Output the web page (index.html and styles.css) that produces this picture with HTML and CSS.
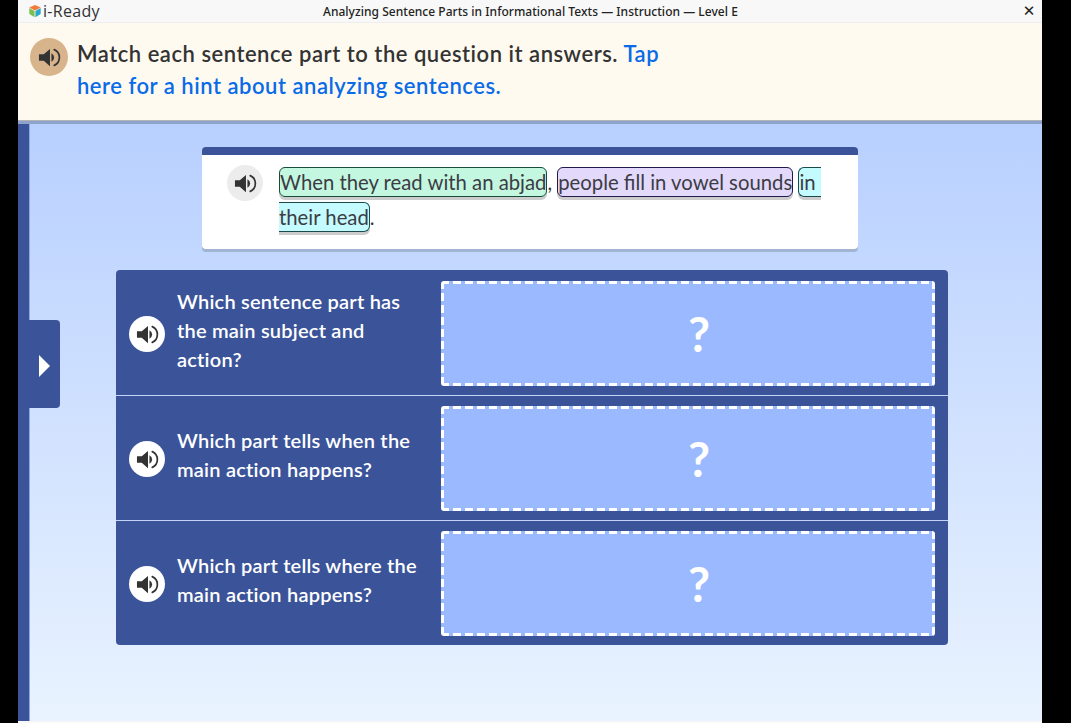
FILE: index.html
```html
<!DOCTYPE html>
<html lang="en">
<head>
    <meta charset="UTF-8">
    <meta name="viewport" content="width=device-width, initial-scale=1.0">
    <title>i-Ready</title>
    <link rel="stylesheet" href="styles.css">
</head>
<body>
    <svg class="icon-defs" width="0" height="0">
        <symbol id="speaker" viewBox="0 0 24 24">
            <path d="M1 8.5h5L12.5 3v18L6 15.500H1z" fill="currentColor"/>
            <path d="M14 7.500a5 5 0 0 1 0 9z" fill="currentColor"/>
            <path d="M17 3.800a9 9 0 0 1 0 16.400" fill="none" stroke="currentColor" stroke-width="1.800" stroke-linecap="round"/>
        </symbol>
    </svg>

    <div class="app">
        <header class="topbar">
            <div class="logo">
                <svg class="cube" viewBox="0 0 16 16">
                    <path d="M8 1l6.500 3L8 7.500 1.500 4z" fill="#f47a3a"/>
                    <path d="M1.500 4.500L7.500 8v7l-6-3.500z" fill="#7cc04b"/>
                    <path d="M14.500 4.500L8.500 8v7l6-3.500z" fill="#2aa7c9"/>
                </svg>
                <span>i-Ready</span>
            </div>
            <div class="lesson-title">Analyzing Sentence Parts in Informational Texts — Instruction — Level E</div>
            <div class="close">✕</div>
        </header>

        <section class="instruction">
            <button class="speak speak-tan"><svg><use href="#speaker"/></svg></button>
            <p>Match each sentence part to the question it answers. <a href="#">Tap here for a hint about analyzing sentences.</a></p>
        </section>

        <main class="stage">
            <div class="strip"></div>
            <div class="content">
                <div class="tab"><span class="arrow"></span></div>

                <div class="sentence-card">
                    <button class="speak speak-grey"><svg><use href="#speaker"/></svg></button>
                    <p class="sentence"><span class="part part-green">When they read with an abjad</span>, <span class="part part-purple">people fill in vowel sounds</span> <span class="part part-teal">in&nbsp;<br>their head</span>.</p>
                </div>

                <div class="match-table">
                    <div class="match-row">
                        <button class="speak speak-white"><svg><use href="#speaker"/></svg></button>
                        <div class="question">Which sentence part has the main subject and action?</div>
                        <div class="dropzone">?</div>
                    </div>
                    <div class="match-row">
                        <button class="speak speak-white"><svg><use href="#speaker"/></svg></button>
                        <div class="question">Which part tells when the main action happens?</div>
                        <div class="dropzone">?</div>
                    </div>
                    <div class="match-row">
                        <button class="speak speak-white"><svg><use href="#speaker"/></svg></button>
                        <div class="question">Which part tells where the main action happens?</div>
                        <div class="dropzone">?</div>
                    </div>
                </div>
            </div>
        </main>
        <div class="footer"></div>
    </div>
</body>
</html>
```

FILE: styles.css
```css
html, body {
    margin: 0;
    height: 100%;
    background-color: #000;
    overflow: hidden;
}

body {
    font-family: 'Lato', 'Liberation Sans', sans-serif;
}

.icon-defs {
    position: absolute;
}

.app {
    width: 1024px;
    height: 723px;
    margin-left: 18px;
    display: flex;
    flex-direction: column;
    background-color: #f8f8f8;
}

/* top bar */
.topbar {
    height: 22px;
    flex: none;
    display: flex;
    align-items: center;
    padding: 0 6px 0 10px;
    background-color: #f8f8f8;
    border-bottom: 1px solid #eeeeee;
    color: #222;
}

.logo {
    width: 295px;
    flex: none;
    display: flex;
    align-items: center;
    gap: 1px;
    font-family: 'Open Sans', sans-serif;
    font-size: 16px;
    letter-spacing: 0.3px;
    color: #333;
}

.cube {
    width: 14px;
    height: 14px;
}

.lesson-title {
    flex: 1;
    font-family: 'Noto Sans', sans-serif;
    font-size: 12px;
    font-weight: 500;
    letter-spacing: 0.03px;
}

.close {
    width: 14px;
    font-family: 'DejaVu Sans', sans-serif;
    font-size: 15px;
    font-weight: bold;
    text-align: center;
}

/* speaker buttons */
.speak {
    flex: none;
    width: 36px;
    height: 36px;
    padding: 0;
    border: none;
    border-radius: 50%;
    display: flex;
    align-items: center;
    justify-content: center;
    color: #333;
}

.speak svg {
    width: 23px;
    height: 23px;
}

.speak-tan {
    width: 38px;
    height: 38px;
    background-color: #d8b48c;
}

.speak-grey {
    background-color: #ececec;
}

.speak-white {
    background-color: #fff;
}

/* instruction */
.instruction {
    height: 98px;
    flex: none;
    box-sizing: border-box;
    display: flex;
    align-items: flex-start;
    gap: 9px;
    padding: 15px 0 0 12px;
    background-color: #fffaef;
    border-bottom: 1px solid #b4b4b4;
}

.instruction p {
    width: 600px;
    margin: 0;
    font-size: 22px;
    font-weight: 600;
    line-height: 32px;
    letter-spacing: 0.52px;
    color: #333;
}

.instruction a {
    color: #0a6be8;
    text-decoration: none;
}

/* stage */
.stage {
    flex: 1;
    display: flex;
    min-height: 0;
    border-top: 3px solid #8ea3cc;
    background: linear-gradient(#b8d0ff, #e9f3ff);
}

.strip {
    width: 11px;
    flex: none;
    background-color: #3b5499;
    box-shadow: 1px 0 0 #8fa8de;
}

.content {
    position: relative;
    flex: 1;
    padding-top: 23px;
}

.tab {
    position: absolute;
    left: 0;
    top: 196px;
    width: 31px;
    height: 88px;
    display: flex;
    align-items: center;
    justify-content: center;
    background-color: #3b5499;
    border-radius: 0 4px 4px 0;
}

.arrow {
    margin-top: 3px;
    border-left: 11px solid #fff;
    border-top: 11px solid transparent;
    border-bottom: 11px solid transparent;
}

/* sentence */
.sentence-card {
    box-sizing: border-box;
    width: 656px;
    height: 102px;
    margin-left: 173px;
    display: flex;
    align-items: flex-start;
    gap: 16px;
    padding: 10px 0 0 25px;
    background-color: #fff;
    border-top: 8px solid #3b5499;
    border-radius: 4px;
    box-shadow: 0 3px 0 #a3b3d3;
}

.sentence {
    margin: 0;
    font-size: 20.3px;
    line-height: 35px;
    color: #3c3c44;
    white-space: nowrap;
}

.part {
    padding: 2px 0;
    border: 1px solid #222;
    border-radius: 6px;
    box-shadow: 0 3px 0 #cccccc;
}

.part-green {
    background-color: #c3f7e0;
    border-color: #1a4a3c;
}

.part-purple {
    background-color: #e3d9fb;
    border-color: #221a48;
}

.part-teal {
    background-color: #c3fbff;
    border-color: #1a4a4c;
}

/* matching table */
.match-table {
    width: 832px;
    margin: 21px 0 0 87px;
    border-radius: 4px;
    overflow: hidden;
    background-color: #3b5499;
}

.match-row {
    box-sizing: border-box;
    height: 125px;
    display: flex;
    align-items: center;
    padding: 1px 13px 0 13px;
    border-top: 1px solid #c3d3f5;
}

.match-row:first-child {
    padding-top: 2px;
    border-top: none;
}

.match-row .speak {
    margin-top: 1px;
}

.question {
    width: 250px;
    margin: 0 14px 7px 12px;
    font-size: 20px;
    font-weight: 600;
    line-height: 29px;
    letter-spacing: 0.22px;
    color: #fff;
}

.dropzone {
    box-sizing: border-box;
    width: 494px;
    height: 105px;
    padding: 0 0 1px 22px;
    display: flex;
    align-items: center;
    justify-content: center;
    background-color: #9ab9ff;
    background-image:
        repeating-linear-gradient(90deg, #fff 0 8px, transparent 8px 12px),
        repeating-linear-gradient(90deg, #fff 0 8px, transparent 8px 12px),
        repeating-linear-gradient(180deg, #fff 0 8px, transparent 8px 12px),
        repeating-linear-gradient(180deg, #fff 0 8px, transparent 8px 12px);
    background-size: 100% 3px, 100% 3px, 3px 100%, 3px 100%;
    background-position: top, bottom, left, right;
    background-repeat: no-repeat;
    border-radius: 3px;
    font-size: 48px;
    font-weight: 700;
    color: #fff;
}

.footer {
    height: 2px;
    flex: none;
    background-color: #f8f8f8;
}
```
